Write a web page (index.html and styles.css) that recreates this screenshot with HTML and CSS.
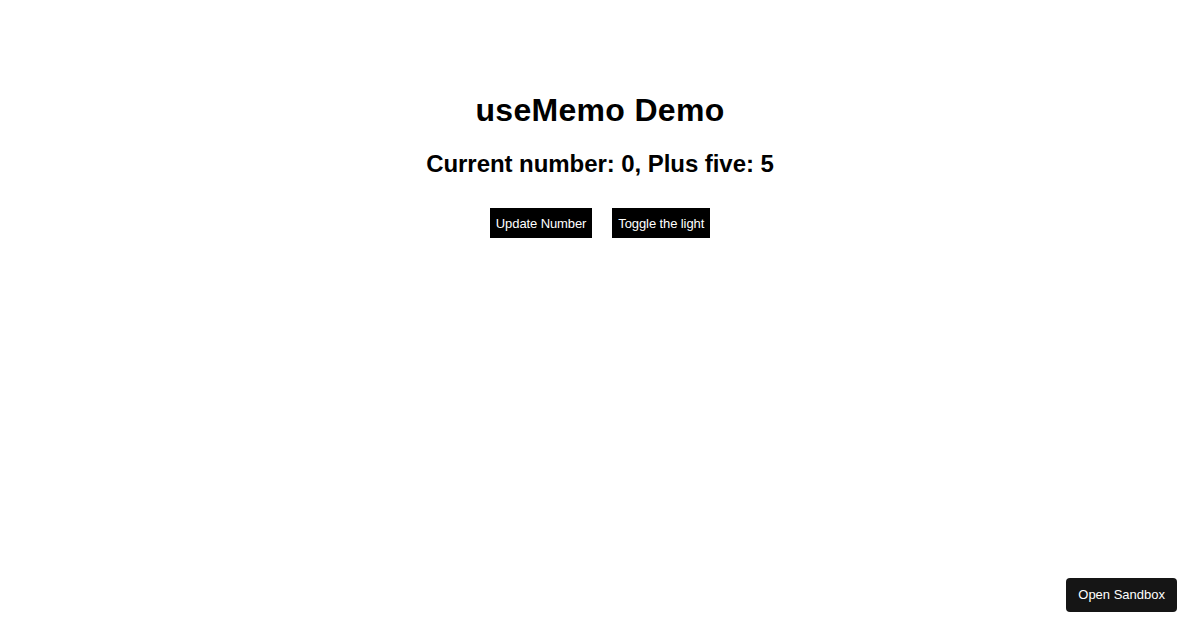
FILE: index.html
```html
<!DOCTYPE html>
<html>
<head>
<meta charset="utf-8">
<link rel="stylesheet" href="styles.css">
</head>
<body>
<div class="app">
  <h1 class="title">useMemo Demo</h1>
  <h2 class="subtitle">Current number: 0, Plus five: 5</h2>
  <div class="actions">
    <button class="btn">Update Number</button>
    <button class="btn">Toggle the light</button>
  </div>
</div>
<button class="sandbox">Open Sandbox</button>
</body>
</html>
```
FILE: styles.css
```css
html, body {
  margin: 0;
  padding: 0;
  background: #fff;
  font-family: "Liberation Sans", Arial, sans-serif;
  color: #000;
}
.app {
  padding-top: 71px;
  text-align: center;
}
.title {
  font-size: 32px;
  font-weight: bold;
  margin: 21px 0;
  line-height: 37px;
  letter-spacing: 0.3px;
}
.subtitle {
  font-size: 24px;
  font-weight: bold;
  margin: 20px 0;
  line-height: 28px;
  letter-spacing: -0.06px;
}
.actions {
  display: flex;
  justify-content: center;
  gap: 20px;
  padding-top: 10px;
}
.btn {
  background: #000;
  color: #fff;
  border: none;
  font-family: "Liberation Sans", Arial, sans-serif;
  font-size: 13px;
  height: 30px;
  padding: 0 6px;
  margin: 0;
  letter-spacing: -0.1px;
}
.sandbox {
  position: fixed;
  right: 23px;
  bottom: 18px;
  background: #151515;
  color: #fff;
  border: none;
  border-radius: 4px;
  font-family: "Liberation Sans", Arial, sans-serif;
  font-size: 13px;
  height: 34px;
  padding: 0 12px 1px;
}
```
